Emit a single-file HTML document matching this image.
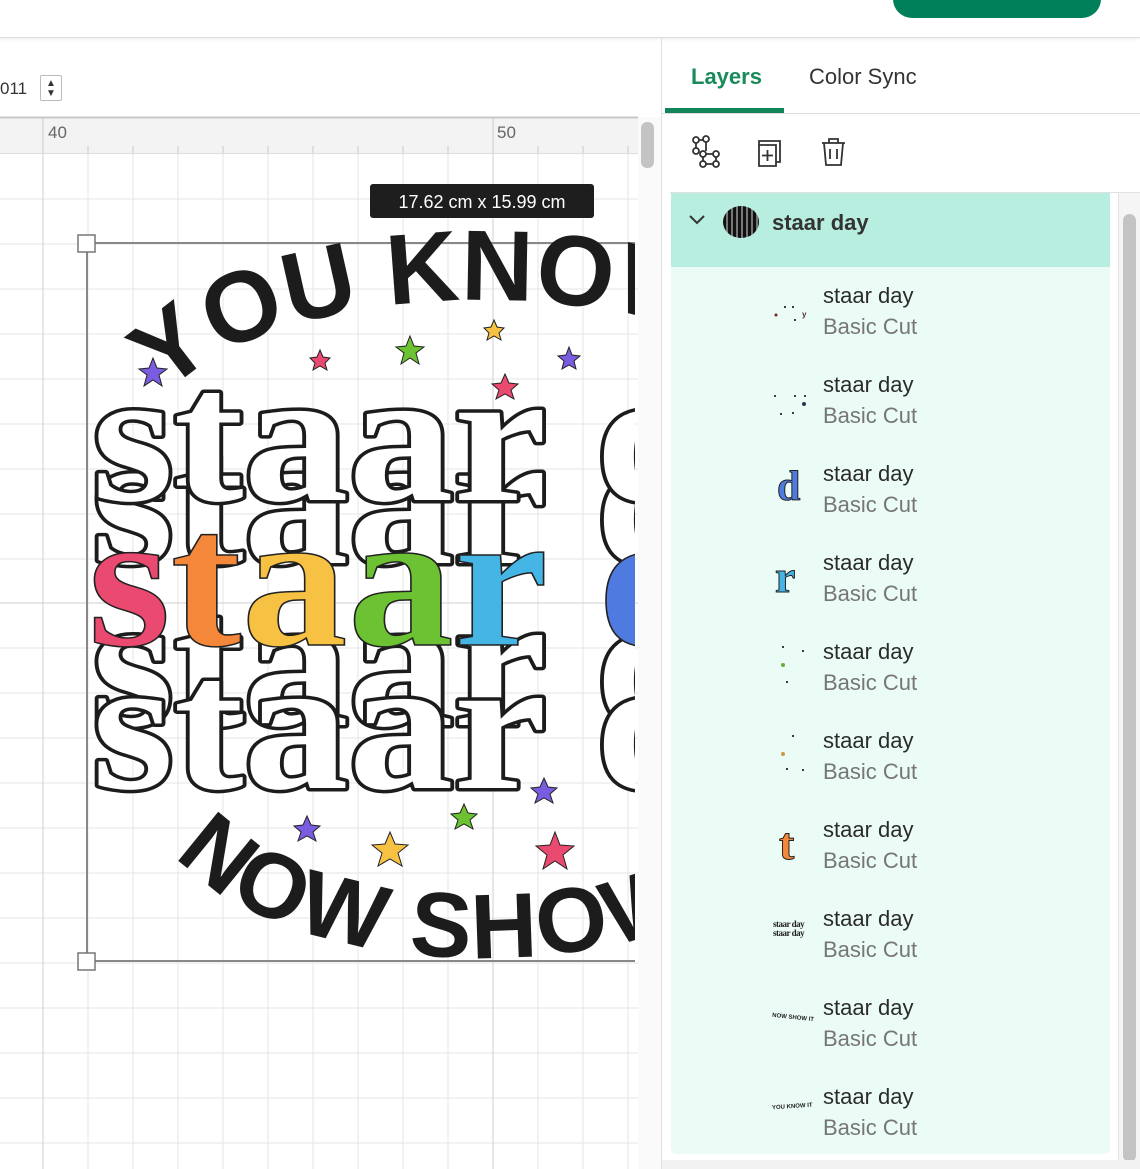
<!DOCTYPE html>
<html><head><meta charset="utf-8"><style>
*{margin:0;padding:0;box-sizing:border-box}
body{width:1140px;height:1169px;overflow:hidden;background:#fff;font-family:"Liberation Sans",sans-serif;position:relative}
.abs{position:absolute}
.row{position:absolute;left:671px;width:439px;height:89px}
.t1{position:absolute;left:152px;top:16px;font-size:22px;color:#2b2b2b}
.t2{position:absolute;left:152px;top:47px;font-size:22px;color:#767676}
.th{position:absolute;left:100px;top:20px;width:44px;height:44px}
</style></head><body>
<div class="abs" style="left:0;top:0;width:1140px;height:38px;background:#fff;border-bottom:1px solid #ddd;box-shadow:0 1px 3px rgba(0,0,0,.08)"></div>
<div class="abs" style="left:893px;top:-20px;width:208px;height:38px;background:#00805a;border-radius:20px"></div>
<div class="abs" style="left:0;top:79px;font-size:17px;color:#333">011</div>
<div class="abs" style="left:40px;top:75px;width:22px;height:26px;border:1px solid #bbb;border-radius:2px;background:#fff;font-size:10px;line-height:10px;text-align:center;padding-top:3px;color:#333">▲<br>▼</div>
<svg class="abs" style="left:0;top:0" width="662" height="1169">
<rect x="0" y="117" width="638" height="1052" fill="#fff"/>
<g stroke="#e6e6e6" stroke-width="1">
<line x1="43" y1="152" x2="43" y2="1169"/><line x1="88" y1="152" x2="88" y2="1169"/><line x1="133" y1="152" x2="133" y2="1169"/><line x1="178" y1="152" x2="178" y2="1169"/><line x1="223" y1="152" x2="223" y2="1169"/><line x1="268" y1="152" x2="268" y2="1169"/><line x1="313" y1="152" x2="313" y2="1169"/><line x1="358" y1="152" x2="358" y2="1169"/><line x1="403" y1="152" x2="403" y2="1169"/><line x1="448" y1="152" x2="448" y2="1169"/><line x1="493" y1="152" x2="493" y2="1169"/><line x1="538" y1="152" x2="538" y2="1169"/><line x1="583" y1="152" x2="583" y2="1169"/><line x1="628" y1="152" x2="628" y2="1169"/>
<line x1="0" y1="199" x2="638" y2="199"/><line x1="0" y1="244" x2="638" y2="244"/><line x1="0" y1="289" x2="638" y2="289"/><line x1="0" y1="334" x2="638" y2="334"/><line x1="0" y1="379" x2="638" y2="379"/><line x1="0" y1="424" x2="638" y2="424"/><line x1="0" y1="469" x2="638" y2="469"/><line x1="0" y1="514" x2="638" y2="514"/><line x1="0" y1="559" x2="638" y2="559"/><line x1="0" y1="648" x2="638" y2="648"/><line x1="0" y1="693" x2="638" y2="693"/><line x1="0" y1="738" x2="638" y2="738"/><line x1="0" y1="783" x2="638" y2="783"/><line x1="0" y1="828" x2="638" y2="828"/><line x1="0" y1="873" x2="638" y2="873"/><line x1="0" y1="918" x2="638" y2="918"/><line x1="0" y1="963" x2="638" y2="963"/><line x1="0" y1="1008" x2="638" y2="1008"/><line x1="0" y1="1053" x2="638" y2="1053"/><line x1="0" y1="1098" x2="638" y2="1098"/><line x1="0" y1="1143" x2="638" y2="1143"/>
</g>
<g stroke="#cfcfcf"><line x1="43" y1="117" x2="43" y2="1169"/><line x1="493" y1="117" x2="493" y2="1169"/><line x1="0" y1="603" x2="638" y2="603"/></g>
<rect x="0" y="117" width="638" height="36" fill="#f3f3f3"/>
<line x1="0" y1="117.5" x2="638" y2="117.5" stroke="#c8c8c8" stroke-width="2"/>
<line x1="0" y1="153.5" x2="638" y2="153.5" stroke="#ddd"/>
<g stroke="#c8c8c8"><line x1="43" y1="117" x2="43" y2="153"/><line x1="493" y1="117" x2="493" y2="153"/>
<line x1="88" y1="146" x2="88" y2="153"/><line x1="133" y1="146" x2="133" y2="153"/><line x1="178" y1="146" x2="178" y2="153"/><line x1="223" y1="146" x2="223" y2="153"/><line x1="268" y1="146" x2="268" y2="153"/><line x1="313" y1="146" x2="313" y2="153"/><line x1="358" y1="146" x2="358" y2="153"/><line x1="403" y1="146" x2="403" y2="153"/><line x1="448" y1="146" x2="448" y2="153"/><line x1="538" y1="146" x2="538" y2="153"/><line x1="583" y1="146" x2="583" y2="153"/><line x1="628" y1="146" x2="628" y2="153"/></g>
<text x="48" y="138" font-size="17" fill="#666" font-family="Liberation Sans">40</text>
<text x="497" y="138" font-size="17" fill="#666" font-family="Liberation Sans">50</text>
<defs>
<clipPath id="c"><rect x="0" y="153" width="635" height="1016"/></clipPath>
<path id="arcT" d="M150,440 A333,140 0 0 1 816,440"/>
<path id="arcB" d="M150,790 A333,168 0 0 0 816,790"/>
</defs>
<g clip-path="url(#c)">
<rect x="87" y="243" width="793" height="718" fill="none" stroke="#888" stroke-width="2"/>
<text font-family="Liberation Sans" font-weight="bold" font-size="100" fill="#1c1c1c"><textPath href="#arcT" startOffset="50%" text-anchor="middle">YOU KNOW IT</textPath></text>
<text font-family="Liberation Sans" font-weight="bold" font-size="92" fill="#1c1c1c" letter-spacing="2"><textPath href="#arcB" startOffset="50%" text-anchor="middle">NOW SHOW IT</textPath></text>
<g font-family="Liberation Serif" font-weight="bold" font-size="190" fill="#fff" stroke="#1c1c1c" stroke-width="7" paint-order="stroke" stroke-linejoin="round">
<text x="92" y="725" textLength="830" lengthAdjust="spacingAndGlyphs">staar day</text>
<text x="92" y="788" textLength="830" lengthAdjust="spacingAndGlyphs">staar day</text>
<text x="92" y="563" textLength="830" lengthAdjust="spacingAndGlyphs">staar day</text>
<text x="92" y="500" textLength="830" lengthAdjust="spacingAndGlyphs">staar day</text>
</g>
<text x="88" y="645" font-family="Liberation Serif" font-weight="bold" font-size="196" stroke="#222" stroke-width="1.5" textLength="840" lengthAdjust="spacingAndGlyphs"><tspan fill="#ea4a70">s</tspan><tspan fill="#f5873a">t</tspan><tspan fill="#f7c244">a</tspan><tspan fill="#6cc232">a</tspan><tspan fill="#45b5e6">r</tspan><tspan fill="#fff" stroke="none"> </tspan><tspan fill="#4f7be0">d</tspan><tspan fill="#e94b6f">a</tspan><tspan fill="#9a5ce0">y</tspan></text>
<g stroke="#222" stroke-width="1">
<polygon fill="#7a5ce0" points="153,358 157,368 167,369 159,375 162,386 153,380 144,386 147,375 139,369 149,368"/>
<polygon fill="#ea4a70" points="320,350 323,357 330,358 325,363 327,370 320,366 313,370 315,363 310,358 317,357"/>
<polygon fill="#6cc232" points="410,336 414,346 424,347 416,353 419,364 410,358 401,364 404,353 396,347 406,346"/>
<polygon fill="#f7c244" points="494,320 497,327 504,328 499,333 501,340 494,336 487,340 489,333 484,328 491,327"/>
<polygon fill="#ea4a70" points="505,374 509,383 518,384 511,390 514,399 505,394 496,399 499,390 492,384 501,383"/>
<polygon fill="#7a5ce0" points="569,347 572,355 580,356 574,361 576,369 569,365 562,369 564,361 558,356 566,355"/>
<polygon fill="#7a5ce0" points="544,778 548,787 557,788 550,794 553,803 544,798 535,803 538,794 531,788 540,787"/>
<polygon fill="#6cc232" points="464,804 468,813 477,814 470,820 473,829 464,824 455,829 458,820 451,814 460,813"/>
<polygon fill="#7a5ce0" points="307,816 311,825 320,826 313,832 316,841 307,836 298,841 301,832 294,826 303,825"/>
<polygon fill="#f7c244" points="390,832 395,844 408,845 398,853 402,866 390,859 378,866 382,853 372,845 385,844"/>
<polygon fill="#ea4a70" points="555,832 560,845 574,846 563,855 567,869 555,861 543,869 547,855 536,846 550,845"/>
</g>
<rect x="78" y="235" width="17" height="17" fill="#fff" stroke="#777" stroke-width="1.5"/>
<rect x="78" y="953" width="17" height="17" fill="#fff" stroke="#777" stroke-width="1.5"/>
</g>
<rect x="370" y="184" width="224" height="34" rx="3" fill="#1e1e1e"/>
<text x="482" y="208" text-anchor="middle" font-family="Liberation Sans" font-size="18" fill="#fff">17.62  cm x 15.99  cm</text>
<rect x="638" y="117" width="24" height="1052" fill="#fafafa"/>
<rect x="641" y="122" width="13" height="46" rx="6" fill="#c4c4c4"/>
<line x1="661.5" y1="38" x2="661.5" y2="1169" stroke="#e0e0e0"/>
</svg>
<div class="abs" style="left:691px;top:64px;font-size:22px;color:#1a8a5a;font-weight:bold">Layers</div>
<div class="abs" style="left:809px;top:64px;font-size:22px;color:#333">Color Sync</div>
<div class="abs" style="left:662px;top:113px;width:478px;height:1px;background:#ddd"></div>
<div class="abs" style="left:665px;top:108px;width:119px;height:5px;background:#13855a"></div>
<svg class="abs" style="left:690px;top:134px" width="170" height="36" fill="none" stroke="#333" stroke-width="1.8">
<circle cx="6" cy="6" r="3"/><circle cx="16" cy="5" r="3"/><circle cx="6" cy="17" r="3"/><circle cx="13" cy="20" r="3"/><circle cx="26" cy="20" r="3"/><circle cx="13" cy="30" r="3"/><circle cx="26" cy="30" r="3"/>
<path d="M9 6H13M6 9V14M16 8V17M16 20H23M13 23V27M26 23V27M16 30H23"/>
<path d="M69 11V7H90V28H86M69 11H86V32H69Z"/><path d="M77.5 16V27M72 21.5H83"/>
<path d="M132 9H155M139 9V5H148V9M134 9L136 31H151L153 9M140 15V25M147 15V25"/>
</svg>
<div class="abs" style="left:670px;top:192px;width:470px;height:1px;background:#e0e0e0"></div>
<div class="abs" style="left:671px;top:193px;width:439px;height:74px;background:#b8eee0"></div>
<div class="abs" style="left:671px;top:267px;width:439px;height:887px;background:#ebfbf5;border-radius:0 0 6px 6px"></div>
<svg class="abs" style="left:688px;top:213px" width="18" height="14"><path d="M2 3L9 10L16 3" fill="none" stroke="#333" stroke-width="2"/></svg>
<div class="abs" style="left:723px;top:206px;width:36px;height:32px;border-radius:50%;background:repeating-linear-gradient(90deg,#111 0 3px,#777 3px 5px);"></div>
<div class="abs" style="left:772px;top:210px;font-size:22px;font-weight:bold;color:#333">staar day</div>
<div class="row" style="top:267px"><svg class="th"><circle cx="5" cy="28" r="1.5" fill="#722"/><circle cx="14" cy="20" r="1"/><circle cx="22" cy="20" r="1"/><circle cx="24" cy="33" r="1"/><text x="31" y="30" font-size="8" font-weight="bold" fill="#533">y</text></svg><div class="t1">staar day</div><div class="t2">Basic Cut</div></div>
<div class="row" style="top:356px"><svg class="th"><circle cx="4" cy="20" r="1"/><circle cx="24" cy="20" r="1"/><circle cx="34" cy="20" r="1"/><circle cx="33" cy="28" r="2" fill="#335"/><circle cx="10" cy="38" r="1"/><circle cx="22" cy="37" r="1"/></svg><div class="t1">staar day</div><div class="t2">Basic Cut</div></div>
<div class="row" style="top:445px"><div class="abs" style="left:106px;top:18px;font:bold 42px 'Liberation Serif',serif;color:#4f7be0;-webkit-text-stroke:1px #222">d</div><div class="t1">staar day</div><div class="t2">Basic Cut</div></div>
<div class="row" style="top:534px"><div class="abs" style="left:104px;top:16px;font:bold 46px 'Liberation Serif',serif;color:#45b5e6;-webkit-text-stroke:1px #222">r</div><div class="t1">staar day</div><div class="t2">Basic Cut</div></div>
<div class="row" style="top:623px"><svg class="th"><circle cx="12" cy="4" r="1"/><circle cx="32" cy="8" r="1"/><circle cx="12" cy="22" r="2" fill="#6a4"/><circle cx="16" cy="39" r="1"/></svg><div class="t1">staar day</div><div class="t2">Basic Cut</div></div>
<div class="row" style="top:712px"><svg class="th"><circle cx="22" cy="4" r="1"/><circle cx="12" cy="22" r="2" fill="#c94"/><circle cx="16" cy="37" r="1"/><circle cx="32" cy="38" r="1"/></svg><div class="t1">staar day</div><div class="t2">Basic Cut</div></div>
<div class="row" style="top:801px"><div class="abs" style="left:108px;top:16px;font:bold 46px 'Liberation Serif',serif;color:#f5873a;-webkit-text-stroke:1px #222">t</div><div class="t1">staar day</div><div class="t2">Basic Cut</div></div>
<div class="row" style="top:890px"><div class="abs" style="left:102px;top:30px;font:bold 9px/9px 'Liberation Serif',serif;color:#222;letter-spacing:-0.5px">staar day<br>staar day</div><div class="t1">staar day</div><div class="t2">Basic Cut</div></div>
<div class="row" style="top:979px"><div class="abs" style="left:101px;top:36px;font:bold 6px 'Liberation Sans',sans-serif;color:#222;transform:rotate(6deg)">NOW SHOW IT</div><div class="t1">staar day</div><div class="t2">Basic Cut</div></div>
<div class="row" style="top:1068px"><div class="abs" style="left:101px;top:36px;font:bold 6px 'Liberation Sans',sans-serif;color:#222;transform:rotate(-4deg)">YOU KNOW IT</div><div class="t1">staar day</div><div class="t2">Basic Cut</div></div>
<div class="abs" style="left:1118px;top:193px;width:22px;height:976px;background:#f5f5f5;border-left:1px solid #e2e2e2"></div>
<div class="abs" style="left:1123px;top:214px;width:13px;height:948px;border-radius:7px;background:#c4c4c4"></div>
<div class="abs" style="left:662px;top:1160px;width:478px;height:9px;background:#f2f2f2"></div>
</body></html>
